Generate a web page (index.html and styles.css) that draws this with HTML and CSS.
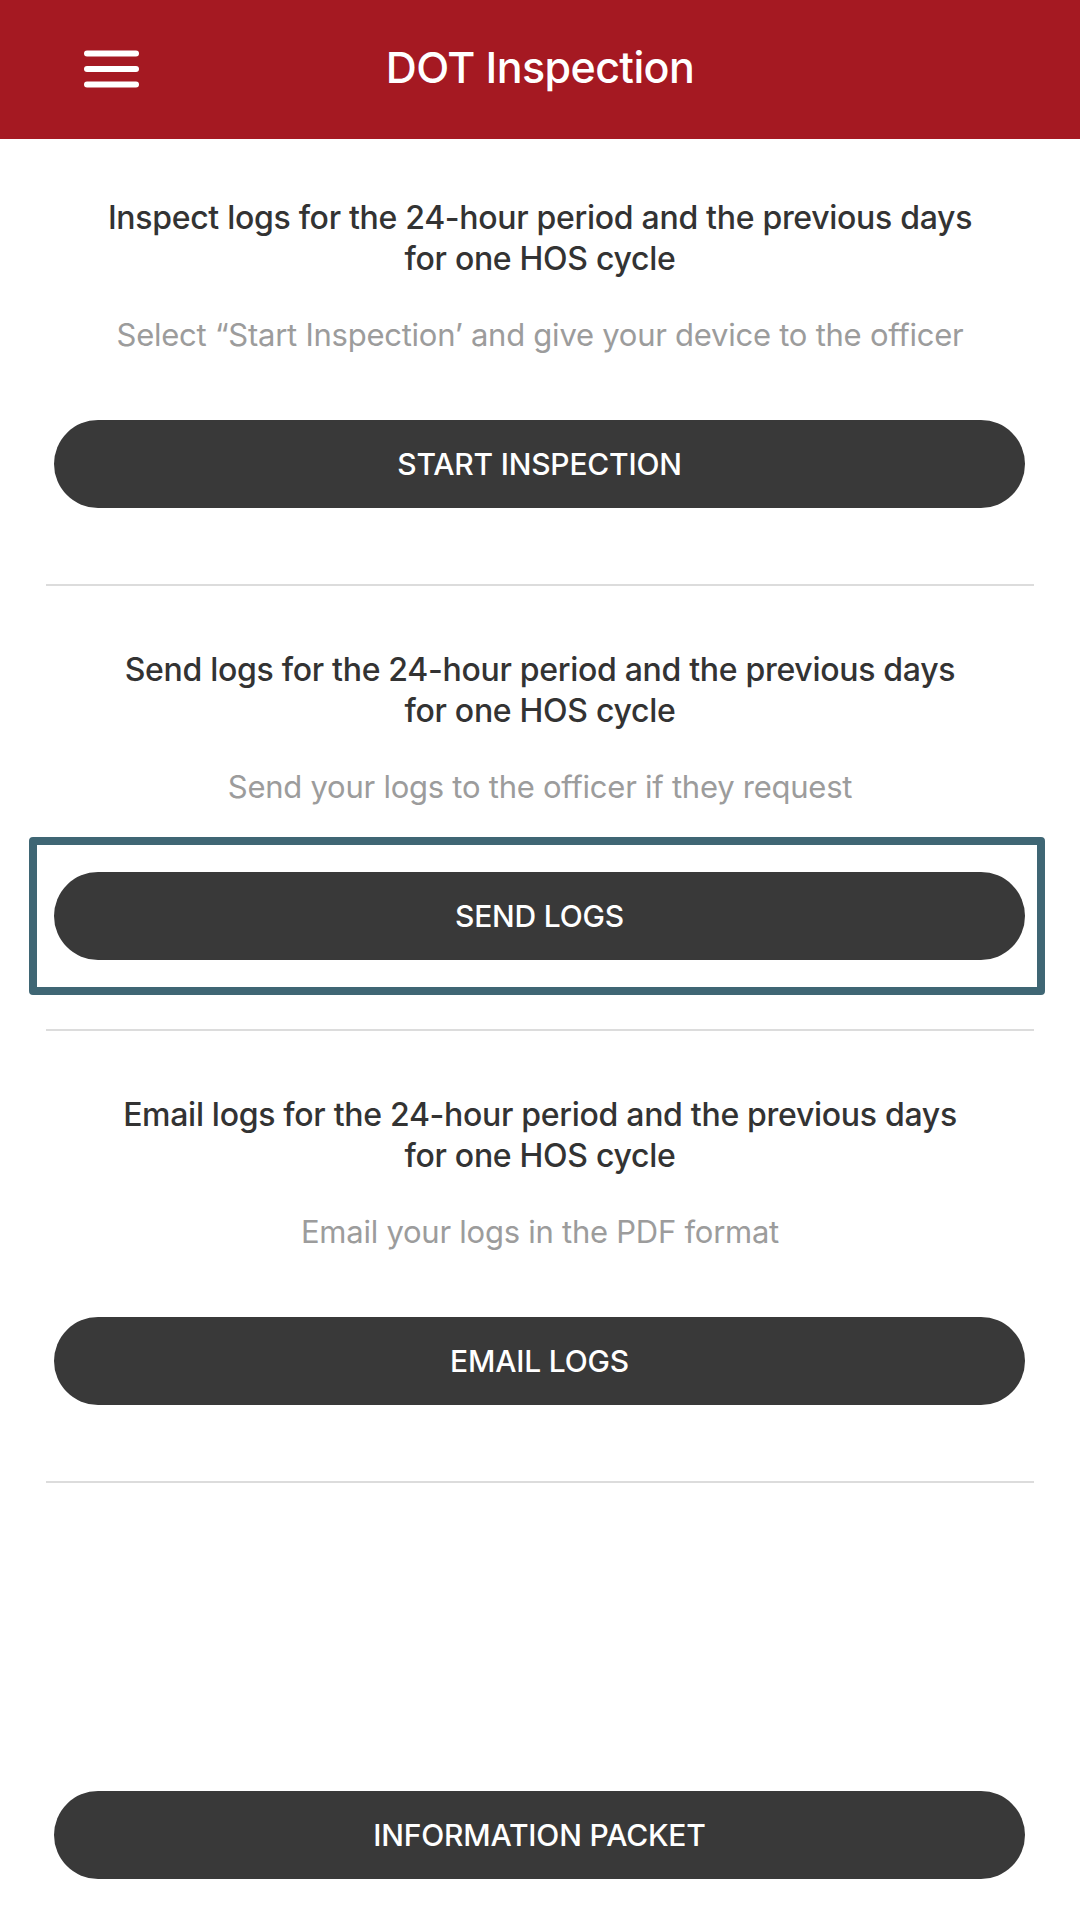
FILE: index.html
```html
<!DOCTYPE html>
<html lang="en">
<head>
<meta charset="utf-8">
<title>DOT Inspection</title>
<link rel="stylesheet" href="styles.css">
</head>
<body>
<div class="app">
  <header class="topbar">
    <button class="menu" aria-label="Menu">
      <svg width="55" height="38" viewBox="0 0 55 38">
        <g stroke="#fff" stroke-width="6" stroke-linecap="round">
          <line x1="3" y1="3.5" x2="52" y2="3.5"/>
          <line x1="3" y1="19" x2="52" y2="19"/>
          <line x1="3" y1="34.5" x2="52" y2="34.5"/>
        </g>
      </svg>
    </button>
    <h1 class="title">DOT Inspection</h1>
  </header>

  <main class="content">
    <section class="section first">
      <p class="heading">Inspect logs for the 24-hour period and the previous days<br>for one HOS cycle</p>
      <p class="hint">Select “Start Inspection’ and give your device to the officer</p>
      <div class="btn-wrap"><button class="btn">START INSPECTION</button></div>
    </section>

    <section class="section middle">
      <p class="heading">Send logs for the 24-hour period and the previous days<br>for one HOS cycle</p>
      <p class="hint">Send your logs to the officer if they request</p>
      <div class="btn-wrap focused"><button class="btn">SEND LOGS</button></div>
    </section>

    <section class="section last">
      <p class="heading">Email logs for the 24-hour period and the previous days<br>for one HOS cycle</p>
      <p class="hint">Email your logs in the PDF format</p>
      <div class="btn-wrap"><button class="btn">EMAIL LOGS</button></div>
    </section>
  </main>

  <footer class="footer">
    <button class="btn">INFORMATION PACKET</button>
  </footer>
</div>
</body>
</html>
```

FILE: styles.css
```css
* { box-sizing: border-box; }

html, body {
  margin: 0;
  padding: 0;
  background: #ffffff;
}

body {
  font-family: Inter, "Noto Sans", "Liberation Sans", sans-serif;
  width: 1080px;
}

.app {
  min-height: 1920px;
  display: flex;
  flex-direction: column;
}

.topbar {
  height: 139px;
  background: #a51922;
  display: flex;
  align-items: center;
  justify-content: center;
  position: relative;
}

.menu {
  position: absolute;
  left: 84px;
  top: 50px;
  padding: 0;
  margin: 0;
  border: 0;
  background: none;
  width: 55px;
  height: 38px;
  display: block;
}

.menu svg { display: block; }

.title {
  margin: 0 0 4px;
  color: #ffffff;
  font-size: 43px;
  font-weight: 500;
  letter-spacing: -0.6px;
  line-height: 1;
}

.content {
  display: flex;
  flex-direction: column;
}

.section {
  margin: 0 46px;
  padding: 63px 0 36px;
  border-bottom: 2px solid #dcdcdc;
  display: flex;
  flex-direction: column;
  align-items: center;
}

.section.first { padding: 58px 0 41px; }
.section.middle { padding: 63px 0 34px; }
.section.last { padding: 63px 0 41px; }

.heading {
  margin: 0;
  text-align: center;
  color: #333333;
  font-size: 32px;
  font-weight: 500;
  line-height: 41px;
  letter-spacing: -0.3px;
}

.hint {
  margin: 35px 0 30px;
  text-align: center;
  color: #9c9c9c;
  font-size: 31px;
  font-weight: 400;
  line-height: 41px;
  letter-spacing: -0.25px;
}

.btn-wrap {
  align-self: stretch;
  margin: 0 -11px 0 -17px;
  border: 8px solid transparent;
  border-radius: 4px;
  padding: 27px 12px 27px 17px;
}

.btn-wrap.focused {
  border-color: #3f6674;
}

.btn {
  display: flex;
  align-items: center;
  justify-content: center;
  width: 971px;
  height: 88px;
  margin: 0;
  padding: 0;
  border: 0;
  border-radius: 44px;
  background: #393939;
  color: #ffffff;
  font-family: Inter, "Noto Sans", "Liberation Sans", sans-serif;
  font-size: 30px;
  font-weight: 500;
  letter-spacing: -0.2px;
}

.footer {
  margin-top: auto;
  padding: 0 0 41px 54px;
}
```
